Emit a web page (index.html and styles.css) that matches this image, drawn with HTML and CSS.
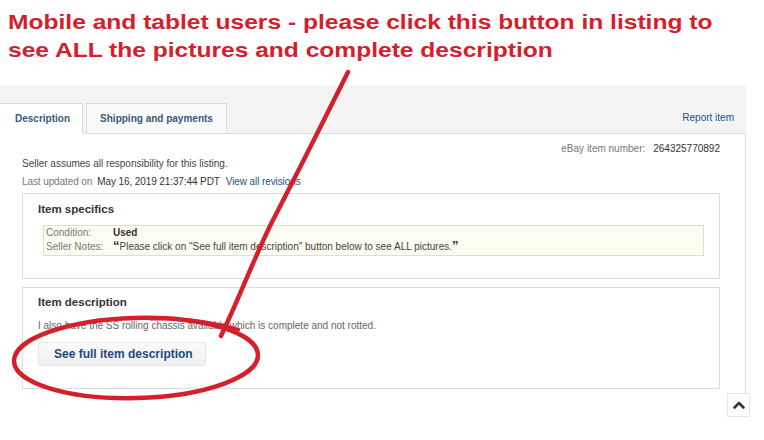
FILE: index.html
```html
<!DOCTYPE html>
<html>
<head>
<meta charset="utf-8">
<link rel="stylesheet" href="styles.css">
</head>
<body>
<div class="page">
  <div class="notice">
    <p class="notice-line">Mobile and tablet users - please click this button in listing to</p>
    <p class="notice-line">see ALL the pictures and complete description</p>
  </div>

  <div class="tabbar">
    <div class="tab tab-active">Description</div>
    <div class="tab">Shipping and payments</div>
    <a class="report">Report item</a>
  </div>

  <div class="panel">
    <div class="itemnum"><span class="muted">eBay item number:</span><span class="num">264325770892</span></div>
    <div class="line">Seller assumes all responsibility for this listing.</div>
    <div class="line line-updated"><span class="muted">Last updated on</span><span class="date">May 16, 2019 21:37:44 PDT</span><a class="link">View all revisions</a></div>

    <div class="box box-specifics">
      <h2 class="box-title">Item specifics</h2>
      <div class="specs">
        <div class="spec-row"><span class="spec-label">Condition:</span><span class="spec-value spec-bold">Used</span></div>
        <div class="spec-row"><span class="spec-label">Seller Notes:</span><span class="spec-value"><b class="quote">“</b>Please click on "See full item description" button below to see ALL pictures.<b class="quote">”</b></span></div>
      </div>
    </div>

    <div class="box box-desc">
      <h2 class="box-title">Item description</h2>
      <div class="desc-text">I also have the SS rolling chassis available which is complete and not rotted.</div>
      <button class="full-btn">See full item description</button>
    </div>
  </div>

  <a class="to-top"><svg width="12" height="8" viewBox="0 0 12 8"><path d="M1.5 6.5 L6 2 L10.5 6.5" fill="none" stroke="#333" stroke-width="2.6" stroke-linecap="round" stroke-linejoin="round"/></svg></a>

  <svg class="annot" width="764" height="440" viewBox="0 0 764 440">
    <path d="M348 72 C 325 118, 300 168, 272 222 C 255 256, 240 296, 221 336" fill="none" stroke="#d3202a" stroke-width="4.5" stroke-linecap="round"/>
    <ellipse cx="136" cy="358" rx="122" ry="40" transform="rotate(-1.5 136 358)" fill="none" stroke="#d3202a" stroke-width="4.5"/>
    <path d="M150 319 C 185 318, 215 322, 240 330" fill="none" stroke="#d3202a" stroke-width="3"/>
  </svg>
</div>
</body>
</html>
```

FILE: styles.css
```css
* { box-sizing: border-box; }
html, body { margin: 0; padding: 0; background: #fff; }
body { font-family: "Liberation Sans", Arial, sans-serif; color: #333; }
.page { position: relative; width: 764px; height: 440px; overflow: hidden; }

.notice { height: 85px; padding: 8px 0 0 8px; }
.notice-line {
  margin: 0;
  font-weight: bold;
  font-size: 21px;
  line-height: 28px;
  color: #d3202a;
  white-space: nowrap;
  transform: scaleX(1.17);
  transform-origin: left center;
}

.tabbar {
  width: 746px;
  height: 49px;
  background: #f4f4f4;
  display: flex;
  align-items: flex-end;
  border-bottom: 1px solid #dcdcdc;
}
.tab {
  height: 31px;
  margin-bottom: -1px;
  padding: 0 15px;
  display: flex;
  align-items: center;
  font-size: 10px;
  font-weight: bold;
  color: #3a5a78;
  background: #f9f9f9;
  border: 1px solid #dcdcdc;
  border-bottom-color: #dcdcdc;
}
.tab-active { width: 83px; background: #fff; border-left: none; border-bottom-color: #fff; }
.tab + .tab { margin-left: 3px; width: 141px; justify-content: center; padding: 0; }
.report {
  margin-left: auto;
  align-self: flex-start;
  margin-top: 27px;
  margin-right: 12px;
  font-size: 10px;
  color: #1f4f87;
}

.panel {
  width: 746px;
  height: 259px;
  border-right: 1px solid #dcdcdc;
  padding: 9px 0 0 22px;
  font-size: 10px;
}
.itemnum {
  display: flex;
  justify-content: flex-end;
  padding-right: 25px;
  line-height: 12px;
  gap: 8px;
}
.muted { color: #777; }
.num { color: #333; }
.line { line-height: 12px; margin-top: 3px; color: #444; }
.line-updated { margin-top: 6px; display: flex; gap: 5px; letter-spacing: -0.1px; }
.date { color: #333; }
.link { color: #1f4f87; margin-left: 1px; }

.box {
  width: 698px;
  border: 1px solid #dcdcdc;
  padding: 6px 15px 0 15px;
  margin-top: 5px;
}
.box-title {
  margin: 0;
  font-size: 11.5px;
  line-height: 16px;
  font-weight: bold;
  color: #333;
}
.box-specifics { height: 86px; padding-top: 7px; }
.specs {
  margin: 8px 0 0 5px;
  background: #fcfcf0;
  border: 1px solid #e0dfcf;
  padding: 0 2px 1px 2px;
}
.spec-row { display: flex; line-height: 14px; }
.spec-label { width: 67px; color: #777; }
.spec-value { color: #444; }
.spec-bold { font-weight: bold; color: #333; }
.quote { font-size: 13px; line-height: 10px; color: #333; }

.box-desc { height: 102px; margin-top: 8px; }
.desc-text { margin-top: 10px; line-height: 12px; color: #666; }
.full-btn {
  display: block;
  margin-top: 10px;
  width: 168px;
  height: 24px;
  padding: 0 0 0 15px;
  text-align: left;
  font-family: "Liberation Sans", Arial, sans-serif;
  font-size: 12px;
  font-weight: bold;
  color: #1c4a7f;
  background: linear-gradient(#fafafa, #f0f0f0);
  border: 1px solid #e6e6e6;
  border-radius: 2px;
}

.to-top {
  position: absolute;
  left: 727px;
  top: 393px;
  width: 23px;
  height: 24px;
  background: #fff;
  border: 1px solid #e6e6e6;
  display: flex;
  align-items: center;
  justify-content: center;
}
.annot { position: absolute; left: 0; top: 0; pointer-events: none; }
```
